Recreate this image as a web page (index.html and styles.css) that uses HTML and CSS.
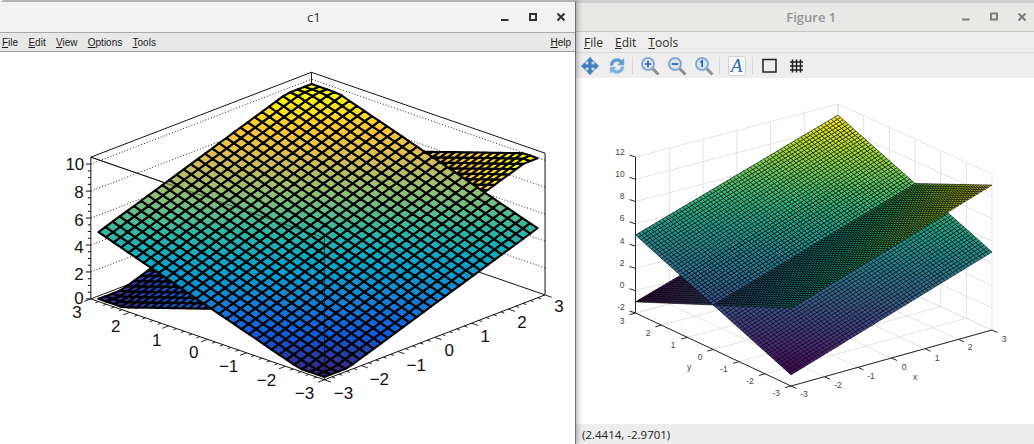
FILE: index.html
```html
<!DOCTYPE html>
<html lang="en">
<head>
<meta charset="utf-8">
<title>c1 and Figure 1</title>
<link rel="stylesheet" href="styles.css">
</head>
<body>
<div class="desktop">
  <section class="win win-root">
    <header class="titlebar titlebar-root">
      <h1 class="title title-root">c1</h1>
      <div class="wbtns wbtns-root">
        <svg class="wbtn" viewBox="0 0 14 14"><path d="M3 10h7.500" /></svg>
        <svg class="wbtn" viewBox="0 0 14 14"><path d="M4 4h6v6H4z" /></svg>
        <svg class="wbtn" viewBox="0 0 14 14"><path d="M3.500 3.500l7 7M10.500 3.500l-7 7" /></svg>
      </div>
    </header>
    <nav class="menubar menubar-root">
      <span class="mi"><u>F</u>ile</span>
      <span class="mi"><u>E</u>dit</span>
      <span class="mi"><u>V</u>iew</span>
      <span class="mi"><u>O</u>ptions</span>
      <span class="mi"><u>T</u>ools</span>
      <span class="mi mi-help"><u>H</u>elp</span>
    </nav>
    <main class="canvas">
      <svg class="plot" viewBox="0 52 576 392">
        <g id="root-back"></g>
        <g id="root-surf"></g>
        <g id="root-front"></g>
        <g class="rl">
          <text x="75" y="170" text-anchor="middle">10</text>
          <text x="79" y="198" text-anchor="middle">8</text>
          <text x="79" y="226" text-anchor="middle">6</text>
          <text x="79" y="253" text-anchor="middle">4</text>
          <text x="79" y="280" text-anchor="middle">2</text>
          <text x="79" y="304.500" text-anchor="middle">0</text>
          <text x="77" y="318.500" text-anchor="middle">3</text>
          <text x="116" y="332" text-anchor="middle">2</text>
          <text x="157" y="346" text-anchor="middle">1</text>
          <text x="194" y="358" text-anchor="middle">0</text>
          <text x="229" y="372" text-anchor="middle">−1</text>
          <text x="267" y="386" text-anchor="middle">−2</text>
          <text x="305" y="399" text-anchor="middle">−3</text>
          <text x="344" y="399" text-anchor="middle">−3</text>
          <text x="380" y="385" text-anchor="middle">−2</text>
          <text x="417" y="371" text-anchor="middle">−1</text>
          <text x="450" y="356" text-anchor="middle">0</text>
          <text x="486" y="342" text-anchor="middle">1</text>
          <text x="523" y="328" text-anchor="middle">2</text>
          <text x="560" y="312" text-anchor="middle">3</text>
        </g>
      </svg>
    </main>
  </section>

  <section class="win win-fig">
    <header class="titlebar titlebar-fig">
      <h1 class="title title-fig">Figure 1</h1>
      <div class="wbtns wbtns-fig">
        <svg class="wbtn" viewBox="0 0 14 14"><path d="M3 9.500h7.500" /></svg>
        <svg class="wbtn" viewBox="0 0 14 14"><path d="M4 3.500h6v6H4z" /></svg>
        <svg class="wbtn" viewBox="0 0 14 14"><path d="M3.500 3.500l7 7M10.500 3.500l-7 7" /></svg>
      </div>
    </header>
    <nav class="menubar menubar-fig">
      <span class="fmi"><u>F</u>ile</span>
      <span class="fmi"><u>E</u>dit</span>
      <span class="fmi"><u>T</u>ools</span>
    </nav>
    <div class="toolbar">
      <span class="tool"><svg viewBox="0 0 24 24" class="ico"><path class="ico-blue" d="M12 3l4.200 4.700h-2.500v2.600h2.600V7.800L21 12l-4.700 4.200v-2.500h-2.600v2.600h2.500L12 21l-4.200-4.700h2.500v-2.600H7.700v2.500L3 12l4.700-4.200v2.500h2.600V7.700H7.800z"/></svg></span>
      <span class="tool"><svg viewBox="0 0 24 24" class="ico"><path class="ico-ref" d="M5 11.500C5 7 8.500 4.500 12 4.500c2 0 3.700.6 5 1.800L19 4.500V11h-6.500l2.300-2.300c-.8-.6-1.700-1-2.800-1-2.300 0-4 1.700-4 3.800z"/><path class="ico-ref2" d="M19 12.500c0 4.500-3.500 7-7 7-2 0-3.700-.6-5-1.800L5 19.500V13h6.500l-2.300 2.300c.8.6 1.700 1 2.800 1 2.300 0 4-1.700 4-3.800z"/></svg></span>
      <span class="tsep"></span>
      <span class="tool"><svg viewBox="0 0 24 24" class="ico"><path class="ico-handle" d="M14.500 14.500l6 6"/><circle class="ico-lens" cx="10" cy="10" r="6"/><path class="ico-sign" d="M6.800 10h6.400M10 6.800v6.400"/></svg></span>
      <span class="tool"><svg viewBox="0 0 24 24" class="ico"><path class="ico-handle" d="M14.500 14.500l6 6"/><circle class="ico-lens" cx="10" cy="10" r="6"/><path class="ico-sign" d="M6.800 10h6.400"/></svg></span>
      <span class="tool"><svg viewBox="0 0 24 24" class="ico"><path class="ico-handle" d="M14.500 14.500l6 6"/><circle class="ico-lens" cx="10" cy="10" r="6"/><path class="ico-sign" d="M8.300 8.300l1.900-1.300V13"/></svg></span>
      <span class="tsep"></span>
      <span class="tool"><span class="a-btn">A</span></span>
      <span class="tsep"></span>
      <span class="tool"><svg viewBox="0 0 24 24" class="ico"><rect class="ico-black" x="5" y="5.500" width="13" height="12.500"/></svg></span>
      <span class="tool"><svg viewBox="0 0 24 24" class="ico"><path class="ico-black" d="M7.500 5.500v13M11.500 5.500v13M15.500 5.500v13M5 8h13M5 12h13M5 16h13"/></svg></span>
    </div>
    <main class="canvas canvas-fig">
      <svg class="plot" viewBox="576 78 458 346">
        <g id="fig-back"></g>
        <g id="fig-surf"></g>
        <g id="fig-axes"></g>
        <g class="fl">
          <text x="620" y="155">12</text><text x="620" y="177">10</text>
          <text x="622" y="199">8</text><text x="622" y="221">6</text>
          <text x="622" y="244">4</text><text x="622" y="266">2</text>
          <text x="622" y="288">0</text><text x="621" y="310">-2</text>
          <text x="622" y="324">3</text><text x="648" y="336">2</text>
          <text x="673" y="348">1</text><text x="700" y="360">0</text>
          <text x="724" y="372">-1</text><text x="750" y="384">-2</text>
          <text x="776" y="396">-3</text><text x="689" y="370">y</text>
          <text x="804" y="397">-3</text><text x="838" y="388">-2</text>
          <text x="871" y="379">-1</text><text x="904" y="370">0</text>
          <text x="937" y="361">1</text><text x="970" y="350">2</text>
          <text x="1004" y="342">3</text><text x="915" y="380">x</text>
        </g>
      </svg>
    </main>
    <footer class="status">(2.4414, -2.9701)</footer>
  </section>
</div>
<script src="plot.js"></script>
</body>
</html>
```

FILE: styles.css
```css
* { box-sizing: border-box; }
html, body { margin: 0; padding: 0; background: #fff; }
body { width: 1034px; height: 444px; overflow: hidden; }

.desktop { display: flex; width: 1034px; height: 444px; overflow: hidden; }
.win { display: flex; flex-direction: column; height: 444px; background: #fff; }
.win-root {
  width: 576px;
  position: relative;
  z-index: 2;
  border-top: 2px solid #b4b4b4;
  border-right: 1px solid #6e6e6e;
  border-top-left-radius: 5px;
  box-shadow: 2px 0 5px rgba(0, 0, 0, .28);
}
.win-fig { flex: 1; border-top: 3px solid #cfcfcf; }

.titlebar { display: flex; align-items: center; flex: none; }
.titlebar-root { height: 31px; background: #f2f2f2; border-bottom: 1px solid #a9a9a9; }
.titlebar-fig { height: 29px; background: #e8e8e6; border-bottom: 1px solid #c6c6c6; }
.title { flex: 1; margin: 0; text-align: center; font-family: "Open Sans", sans-serif; font-size: 13px; }
.title-root { padding-left: 130px; font-weight: 500; color: #2e3436; }
.title-fig { padding-left: 88px; font-weight: 600; color: #929595; }

.wbtns { display: flex; gap: 14px; }
.wbtns-root { padding-right: 7.500px; stroke: #2e3436; }
.wbtns-fig { padding-right: 5.500px; stroke: #7d7d7d; }
.wbtn { width: 14px; height: 14px; fill: none; stroke-width: 2; display: block; }

.menubar { display: flex; align-items: center; flex: none; }
.menubar-root { height: 19px; background: #e8e8e8; border-bottom: 1px solid #9c9c9c; padding-left: 2px; gap: 10.300px; }
.mi { font-family: "Liberation Sans", sans-serif; font-size: 10px; color: #1c1c1c; }
.mi-help { margin-left: auto; margin-right: 4px; }

.menubar-fig { height: 21px; background: #eeeeee; border-bottom: 1px solid #d9d9d9; padding-left: 8px; gap: 12px; }
.fmi { font-family: "Open Sans", sans-serif; font-size: 12px; color: #2b2b2b; }

.toolbar { display: flex; align-items: center; height: 25px; flex: none; background: #eeeeee; }
.tool { width: 27px; height: 25px; display: flex; align-items: center; justify-content: center; }
.ico { width: 24px; height: 24px; display: block; flex: none; }
.tsep { width: 6px; height: 17px; display: block; background: linear-gradient(90deg, transparent 2px, #d6d6d6 2px, #d6d6d6 3px, transparent 3px); }

.ico-blue { fill: #3f7fc0; stroke: #7aa7d4; stroke-width: .6; }
.ico-ref { fill: #5e9ad0; stroke: #8db8dc; stroke-width: .5; }
.ico-ref2 { fill: #7fb0dc; stroke: #a6c8e4; stroke-width: .5; }
.ico-handle { stroke: #8e8e8e; stroke-width: 3; fill: none; }
.ico-lens { fill: #dbe6f0; stroke: #84a9cf; stroke-width: 2; }
.ico-sign { stroke: #2a5fa5; stroke-width: 1.700; fill: none; }
.ico-black { fill: none; stroke: #222; stroke-width: 1.500; }

.a-btn {
  width: 18px; height: 20px;
  display: flex; align-items: center; justify-content: center;
  border: 1px solid #d4d4d4; border-radius: 2px; background: #f7f7f7;
  font-family: "Liberation Serif", serif; font-style: italic; font-size: 19px; line-height: 1; color: #2a6bb5;
}

.canvas { flex: 1; min-height: 0; background: #fff; }
.plot { display: block; width: 100%; height: 100%; }

.rl text { font-family: "Liberation Sans", sans-serif; font-size: 17px; fill: #111; }
.fl text { font-family: "Liberation Sans", sans-serif; font-size: 8.500px; fill: #444; text-anchor: middle; }

.status {
  flex: none; height: 20px; padding-left: 6px;
  background: #ededed; display: flex; align-items: center;
  font-family: "Open Sans", sans-serif; font-size: 11.500px; color: #222;
}
```

FILE: plot.js
```js
var NS = 'http://www.w3.org/2000/svg';

function el(parent, name, attrs) {
  var e = document.createElementNS(NS, name);
  for (var k in attrs) e.setAttribute(k, attrs[k]);
  parent.appendChild(e);
  return e;
}
function line(g, a, b, stroke, w, dash) {
  var at = { x1: a[0], y1: a[1], x2: b[0], y2: b[1], stroke: stroke, 'stroke-width': w };
  if (dash) at['stroke-dasharray'] = dash;
  el(g, 'line', at);
}
function ramp(stops, t) {
  t = Math.max(0, Math.min(1, t)) * (stops.length - 1);
  var i = Math.min(stops.length - 2, Math.floor(t)), f = t - i;
  var c = [0, 1, 2].map(function (j) {
    return Math.round(stops[i][j] + (stops[i + 1][j] - stops[i][j]) * f);
  });
  return 'rgb(' + c.join(',') + ')';
}
function clamp(v, a, b) { return Math.max(a, Math.min(b, v)); }
function mix(a, b, t) { return [a[0] + (b[0] - a[0]) * t, a[1] + (b[1] - a[1]) * t]; }

var BIRD = [[53,42,135],[15,92,221],[20,129,214],[6,164,202],[46,183,164],[135,191,119],[209,187,89],[254,200,50],[249,251,14]];
var VIRIDIS = [[68,1,84],[72,40,120],[62,74,137],[49,104,142],[38,130,142],[31,158,137],[53,183,121],[110,206,88],[181,222,43],[253,231,37]];

/* ---- ROOT canvas ---- */
(function () {
  var B = [325, 380], L = [91, 299], R = [546, 295], T0 = [312, 214];
  var H = 13.5;
  function P(u, v, z) {
    return [
      B[0] + u * (R[0] - B[0]) + v * (L[0] - B[0]),
      B[1] + u * (R[1] - B[1]) + v * (L[1] - B[1]) - z * H
    ];
  }
  var back = document.getElementById('root-back');
  var surf = document.getElementById('root-surf');
  var front = document.getElementById('root-front');
  var TOP = 142;
  var TL = [L[0], L[1] - TOP], TR = [R[0], R[1] - TOP], TT = [T0[0], T0[1] - TOP], TB = [B[0], B[1] - TOP];

  line(back, L, TL, '#111', 1);
  line(back, R, TR, '#111', 1);
  line(back, T0, TT, '#111', 1);
  line(back, TL, TT, '#111', 1);
  line(back, TR, TT, '#111', 1);
  line(back, TL, TB, '#111', 1);
  line(back, L, T0, '#111', 1);
  line(back, R, T0, '#111', 1);
  line(back, L, B, '#111', 1);
  line(back, R, B, '#111', 1);

  for (var z = 2; z <= 10; z += 2) {
    var c = [T0[0], T0[1] - z * H];
    line(back, [L[0], L[1] - z * H], c, '#222', 1, '1 2');
    line(back, [R[0], R[1] - z * H], c, '#222', 1, '1 2');
  }
  for (var i = 0; i <= 20; i++) {
    var zz = i * .5;
    var len = i % 4 === 0 ? 5 : 3;
    var y = L[1] - zz * H;
    line(back, [L[0] - len, y], [L[0], y], '#111', 1);
  }
  function unit(a, b, n) {
    var dx = b[0] - a[0], dy = b[1] - a[1], l = Math.hypot(dx, dy);
    return [dx / l * n, dy / l * n];
  }
  for (var k = 0; k <= 30; k++) {
    var t = k / 30, major = k % 5 === 0, n = major ? 7 : 3.500;
    var p1 = mix(B, L, t), d1 = unit(R, B, n);
    line(back, p1, [p1[0] + d1[0], p1[1] + d1[1]], '#111', .9);
    var p2 = mix(B, R, t), d2 = unit(L, B, n);
    line(back, p2, [p2[0] + d2[0], p2[1] + d2[1]], '#111', .9);
  }

  var N = 30, E = 1 / 60;
  function grid(f, zmax) {
    for (var i = 0; i < N; i++) {
      for (var j = 0; j < N; j++) {
        var du = (1 - 2 * E) / N;
        var u0 = E + i * du, v0 = E + j * du, u1 = u0 + du, v1 = v0 + du;
        var z00 = f(u0, v0), z10 = f(u1, v0), z11 = f(u1, v1), z01 = f(u0, v1);
        var pts = [P(u0, v0, z00), P(u1, v0, z10), P(u1, v1, z11), P(u0, v1, z01)];
        el(surf, 'polygon', {
          points: pts.map(function (p) { return p[0].toFixed(1) + ',' + p[1].toFixed(1); }).join(' '),
          fill: ramp(BIRD, ((z00 + z10 + z11 + z01) / 4) / zmax),
          stroke: '#000', 'stroke-width': 2.100, 'stroke-linejoin': 'round'
        });
      }
    }
  }
  var main = function (u, v) { return clamp(4.95 + 5.75 * (u + v - 1), 0, 9.85); };
  var second = function (u, v) { return clamp(4.95 + 5.75 * (u - v), 0, 10.15); };
  grid(second, 10.15);
  grid(main, 9.85);

  line(front, TB, B, '#111', .8);
  line(front, TL, TB, '#111', .6);
})();

/* ---- Figure 1 ---- */
(function () {
  var B = [791, 386], L = [635.5, 313], R = [992, 330], T0 = [838, 260];
  var H = 156 / 14;
  function P(u, v, z) {
    var x = B[0] * (1 - u) * (1 - v) + R[0] * u * (1 - v) + L[0] * (1 - u) * v + T0[0] * u * v;
    var y = B[1] * (1 - u) * (1 - v) + R[1] * u * (1 - v) + L[1] * (1 - u) * v + T0[1] * u * v;
    return [x, y - (z + 2) * H];
  }
  var back = document.getElementById('fig-back');
  var surf = document.getElementById('fig-surf');
  var axes = document.getElementById('fig-axes');
  var GRID = '#e3e3e3';

  for (var z = -2; z <= 12; z += 2) {
    line(back, P(0, 1, z), P(1, 1, z), GRID, 1);
    line(back, P(1, 0, z), P(1, 1, z), GRID, 1);
  }
  for (var i = 0; i <= 6; i++) {
    var t = i / 6;
    line(back, P(t, 1, -2), P(t, 1, 12), GRID, 1);
    line(back, P(1, t, -2), P(1, t, 12), GRID, 1);
    line(back, P(t, 0, -2), P(t, 1, -2), GRID, 1);
    line(back, P(0, t, -2), P(1, t, -2), GRID, 1);
  }

  var N = 60;
  function cells(f, v0, v1) {
    for (var i = 0; i < N; i++) {
      for (var j = Math.round(v0 * N); j < Math.round(v1 * N); j++) {
        var ua = i / N, ub = (i + 1) / N, va = j / N, vb = (j + 1) / N;
        var pts = [P(ua, va, f(ua, va)), P(ub, va, f(ub, va)), P(ub, vb, f(ub, vb)), P(ua, vb, f(ua, vb))];
        var zc = f((ua + ub) / 2, (va + vb) / 2);
        el(surf, 'polygon', {
          points: pts.map(function (p) { return p[0].toFixed(2) + ',' + p[1].toFixed(2); }).join(' '),
          fill: ramp(VIRIDIS, (zc + 1) / 12),
          stroke: '#000', 'stroke-width': .6
        });
      }
    }
  }
  var main = function (u, v) { return 5 + (6 * u - 3) + (6 * v - 3); };
  var second = function (u, v) { return 5 + (6 * u - 3) - (6 * v - 3); };
  cells(second, .5, 1);
  cells(main, 0, 1);
  cells(second, 0, .5);

  var A = '#262626';
  line(axes, P(0, 1, -2), P(0, 1, 12), A, 1);
  line(axes, L, B, A, 1);
  line(axes, B, R, A, 1);
  for (var z2 = -2; z2 <= 12; z2 += 2) {
    var p = P(0, 1, z2);
    line(axes, p, [p[0] - 6, p[1] - 2], A, 1);
  }
  for (var k = 0; k <= 6; k++) {
    var s = k / 6;
    var a = P(0, s, -2);
    line(axes, a, [a[0] - 6, a[1] + 1.600], A, 1);
    var b = P(s, 0, -2);
    line(axes, b, [b[0] + 5.500, b[1] + 2.500], A, 1);
  }
})();
```
